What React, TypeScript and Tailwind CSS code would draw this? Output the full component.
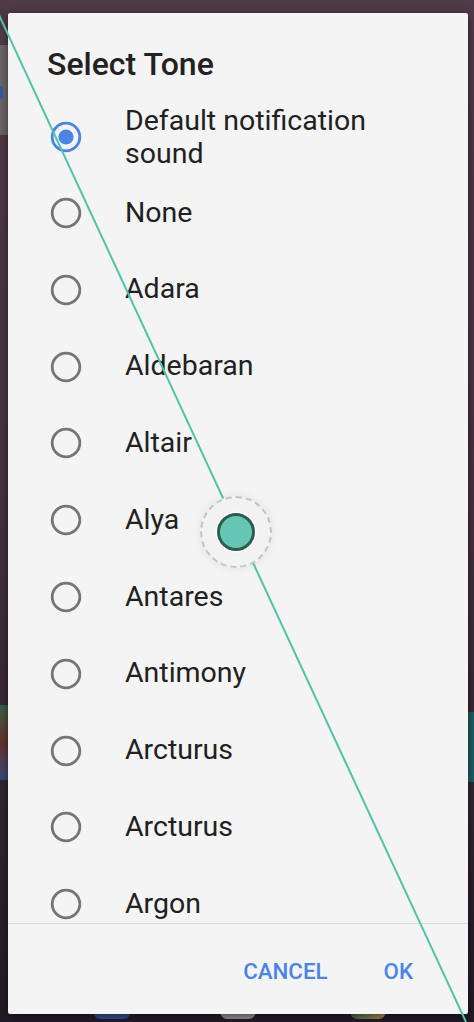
import React from "react";

const tones = [
  "None",
  "Adara",
  "Aldebaran",
  "Altair",
  "Alya",
  "Antares",
  "Antimony",
  "Arcturus",
  "Arcturus",
  "Argon",
];

function Radio({ checked }: { checked?: boolean }) {
  return (
    <svg width="32" height="32" viewBox="0 0 32 32" className="shrink-0">
      {checked ? (
        <>
          <circle cx="16" cy="16" r="13.8" fill="none" stroke="#4a84e6" strokeWidth="2.8" />
          <circle cx="16" cy="16" r="7.6" fill="#4a84e6" />
        </>
      ) : (
        <circle cx="16" cy="16" r="13.8" fill="none" stroke="#757575" strokeWidth="2.8" />
      )}
    </svg>
  );
}

export default function App() {
  return (
    <div className="relative h-[1022px] w-[474px] overflow-hidden bg-gradient-to-b from-[#4f3b48] via-[#45323e] to-[#221a27] font-['Roboto',sans-serif]">
      {/* background hints */}
      <div className="absolute left-0 top-[45px] h-[90px] w-[10px] bg-[#6a6465]" />
      <div className="absolute left-0 top-[86px] h-[13px] w-[3px] rounded-r bg-[#2d5aa8]" />
      <div className="absolute left-0 top-[705px] h-[75px] w-[10px] bg-gradient-to-b from-[#2f6a4c] via-[#6e3426] to-[#34508a] opacity-80" />
      <div className="absolute right-0 top-[712px] h-[70px] w-[8px] bg-[#1d5f62]" />
      <div className="absolute left-[93px] top-[1004px] h-[15px] w-[38px] rounded-full bg-[#2b4f8f]" />
      <div className="absolute left-[220px] top-[1004px] h-[15px] w-[36px] rounded-full bg-[#8f8f8f]" />
      <div className="absolute left-[350px] top-[1004px] h-[15px] w-[36px] rounded-full bg-gradient-to-r from-[#2f6a45] to-[#a58f3a]" />

      <div className="relative z-10 pl-[8px] pr-[6px] pt-[13px]">
        <div className="flex h-[1001px] w-[460px] flex-col rounded-[2px] bg-[#f4f4f4] shadow-[0_2px_8px_rgba(0,0,0,0.5)]">
          <div className="flex h-[86px] shrink-0 items-center pl-[39px] pt-[16px] text-[32px] font-medium text-[#222]">
            Select Tone
          </div>
          <div className="flex-1 overflow-hidden">
            <div className="flex h-[75.6px] items-center">
              <div className="flex w-[117px] justify-start pl-[42px]">
                <Radio checked />
              </div>
              <div className="text-[28.5px] leading-[33px] text-[#212121]">
                Default notification
                <br />
                sound
              </div>
            </div>
            {tones.map((t, i) => (
              <div key={i} className="flex h-[76.8px] items-center">
                <div className="flex w-[117px] justify-start pl-[42px]">
                  <Radio />
                </div>
                <div className="text-[28.5px] text-[#212121]">{t}</div>
              </div>
            ))}
          </div>
          <div className="h-px shrink-0 bg-[#dadada]" />
          <div className="flex h-[90px] shrink-0 items-center justify-end gap-[56px] pr-[55px] pt-[6px]">
            <span className="text-[22.3px] font-medium text-[#4a84e6]">CANCEL</span>
            <span className="text-[22.3px] font-medium text-[#4a84e6]">OK</span>
          </div>
        </div>
      </div>

      {/* pointer trace overlay */}
      <svg className="pointer-events-none absolute inset-0 z-20" width="474" height="1022" viewBox="0 0 474 1022">
        <line x1="-1" y1="15" x2="466" y2="1022" stroke="#4fc4a8" strokeWidth="2" />
      </svg>
      <div className="pointer-events-none absolute left-[200px] top-[496px] z-30 flex h-[72px] w-[72px] items-center justify-center rounded-full border-2 border-dashed border-[#c2c6c4] bg-[#f2f2f2] shadow-[0_0_10px_rgba(0,0,0,0.08)]">
        <div className="h-[38px] w-[38px] rounded-full border-[3px] border-[#2c5d53] bg-[#66c6b4] shadow-[0_0_0_1.5px_#ffffff]" />
      </div>
    </div>
  );
}
